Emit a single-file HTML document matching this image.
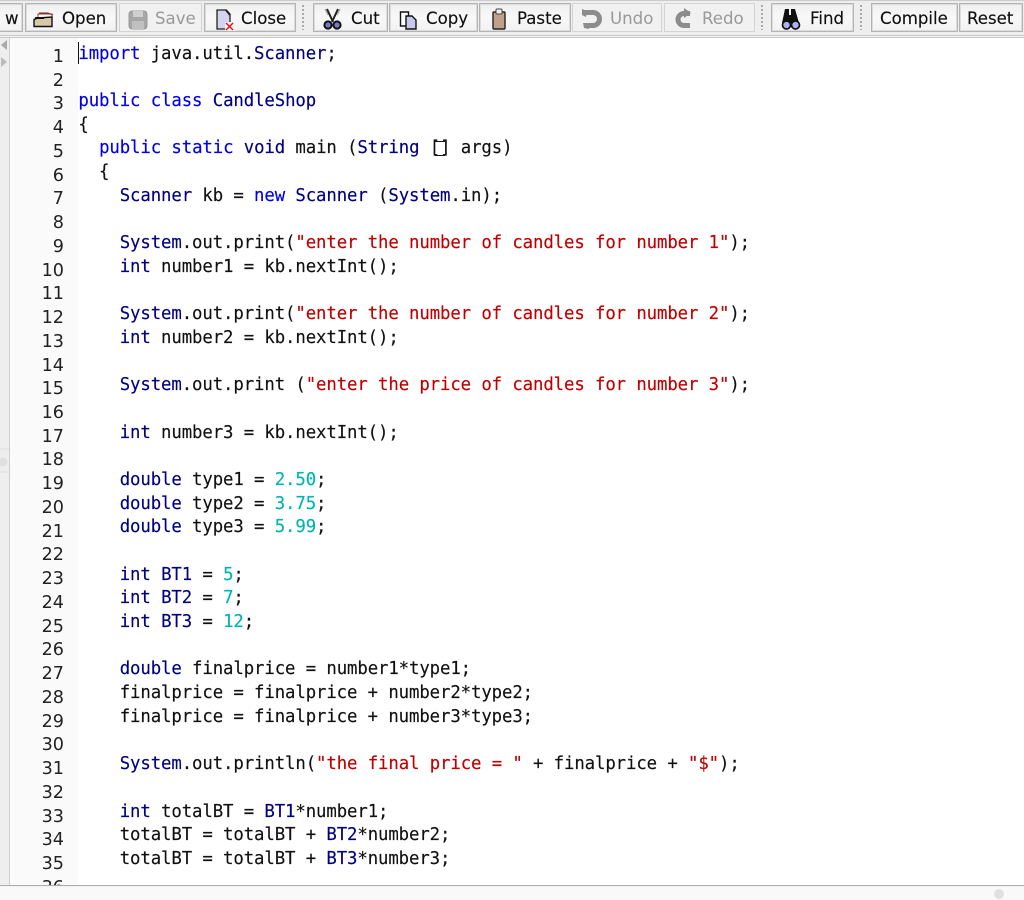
<!DOCTYPE html>
<html><head><meta charset="utf-8"><style>
html,body{margin:0;padding:0;background:#f9f9f9}
#root{position:relative;width:1024px;height:900px;overflow:hidden;background:#f9f9f9;font-family:"DejaVu Sans","Liberation Sans",sans-serif}
#tb{position:absolute;left:0;top:0;width:1024px;height:35px;background:#eee;border-top:1px solid #ccc;box-sizing:border-box}
#tl{position:absolute;left:0;top:35px;width:1024px;height:3px;background:#f4f4f4;border-top:1px solid #c8c8c8;border-bottom:1px solid #c8c8c8;box-sizing:border-box}
.b{position:absolute;top:3px;height:29px;box-sizing:border-box;border:1px solid #b4b4b4;box-shadow:inset 0 0 0 1px #dcdcdc;background:linear-gradient(#efefef,#f8f8f8 50%,#f2f2f2);font-size:16.6px;line-height:29px;color:#111;white-space:nowrap;-webkit-text-stroke:0.15px #111}
.b.d{color:#999;border-color:#d4d4d4;background:#f1f1f1;box-shadow:none;-webkit-text-stroke:0}
.b span{position:absolute;top:0}
.b svg{position:absolute;top:2px;left:0}
.sep{position:absolute;top:5px;width:2px;height:25px;background:repeating-linear-gradient(#aaa 0 2px,transparent 2px 4px)}
#side{position:absolute;left:0;top:38px;width:10px;height:847px;background:#eee;border-right:1px solid #cfcfcf;box-sizing:border-box}
#ed{position:absolute;left:10px;top:38px;width:1014px;height:847px;background:#fff;overflow:hidden}
#gut{position:absolute;left:0;top:0;width:68px;height:847px;background:#fafafa}
#nums{position:absolute;left:0;top:8px;width:54px;text-align:right;font-size:17.6px;line-height:23.73px;color:#222;margin:0;font-family:"DejaVu Sans",sans-serif}
#code{position:absolute;left:68.4px;top:4.5px;margin:0;font-family:"DejaVu Sans Mono","Liberation Mono",monospace;font-size:17.35px;letter-spacing:-0.11px;line-height:23.68px;color:#111;white-space:pre;-webkit-text-stroke:0.15px}
#cur{position:absolute;left:68px;top:4px;width:1px;height:22px;background:#111}
#line2{position:absolute;left:0;top:885px;width:1024px;height:1px;background:#adadad}
#dot{position:absolute;left:994px;top:889px;width:10px;height:10px;border-radius:50%;background:#e0e0e0}
i{font-style:normal;color:#0000e6}
u{text-decoration:none;color:#000080}
s{text-decoration:none;color:#c00000}
b{font-weight:normal;color:#00b4b4}
.bx{position:relative}
.bx::after{content:"";position:absolute;left:5px;right:5px;top:3px;height:12.7px;border-top:1.4px solid #111;border-bottom:1.4px solid #111}
</style></head><body><div id="root">
<div id="tb"></div>
<div id="tl"></div>

<div class="b" style="left:-2px;width:25px"><span style="left:6px">w</span></div>

<div class="b" style="left:25px;width:92px"><svg width="30" height="26" viewBox="0 0 30 26"><path d="M12 8h14v12H12z" fill="#fff" stroke="#8a3a2a"/><path d="M13 7h9l5 2" fill="none" stroke="#7a2a20"/><path d="M12 12l-4 1.5V20.500h18V11z" fill="#d8c8a8" stroke="#111" stroke-width="1.4"/><path d="M9 12h9" stroke="#111" stroke-width="2"/></svg><span style="left:36px">Open</span></div>

<div class="b d" style="left:119px;width:83px"><svg width="30" height="26" viewBox="0 0 30 26"><rect x="9" y="5" width="18" height="18" rx="3" fill="#a6a6a6" stroke="#999"/><rect x="13" y="5" width="10" height="6" fill="#cfcfcf"/><rect x="12" y="15" width="12" height="8" fill="#c0c0c0"/></svg><span style="left:35px">Save</span></div>

<div class="b" style="left:204px;width:92px"><svg width="32" height="26" viewBox="0 0 32 26"><path d="M12 4h9l4 4v15H12z" fill="#d4d4f0" stroke="#222" stroke-width="1.3"/><path d="M21 4l4 5" stroke="#222" stroke-width="2"/><rect x="20" y="16" width="10" height="9" fill="#f4f4f4"/><path d="M21 17l7 7M28 17l-7 7" stroke="#e01010" stroke-width="1.4"/></svg><span style="left:36px">Close</span></div>

<div class="sep" style="left:302px"></div>

<div class="b" style="left:313px;width:75px"><svg width="30" height="26" viewBox="0 0 30 26"><path d="M13 3l6 13M24 3l-6 13" stroke="#222" stroke-width="2" fill="none"/><path d="M11 3l3 6M26 3l-3 6" stroke="#999" stroke-width="1"/><circle cx="14" cy="19" r="3.600" fill="#7878c8" stroke="#111" stroke-width="2"/><circle cx="23" cy="19" r="3.600" fill="#7878c8" stroke="#111" stroke-width="2"/></svg><span style="left:37px">Cut</span></div>

<div class="b" style="left:389px;width:89px"><svg width="30" height="26" viewBox="0 0 30 26"><path d="M10.500 6h8v14h-8z" fill="#fff" stroke="#111" stroke-width="1.4"/><path d="M16 10h6l4 4v9H16z" fill="#c8c8ec" stroke="#111" stroke-width="1.4"/></svg><span style="left:36px">Copy</span></div>

<div class="b" style="left:479px;width:92px"><svg width="30" height="26" viewBox="0 0 30 26"><rect x="13" y="6" width="12" height="17" rx="1" fill="#bfa08a" stroke="#222" stroke-width="1.4"/><rect x="16" y="3" width="6" height="5" rx="1" fill="#eee" stroke="#444"/></svg><span style="left:37px">Paste</span></div>

<div class="b d" style="left:572px;width:90px"><svg width="32" height="26" viewBox="0 0 32 26"><path d="M12 6.500h8a6.500 6.500 0 0 1 0 13h-6" fill="none" stroke="#8c8c8c" stroke-width="5"/><path d="M9 3l5 2-1 6-4-2zM10 17l6 0 0 6-5-1z" fill="#8c8c8c"/></svg><span style="left:37px">Undo</span></div>

<div class="b d" style="left:664px;width:91px"><svg width="30" height="26" viewBox="0 0 30 26"><path d="M25 7.500h-6a6 6 0 0 0 0 12h6" fill="none" stroke="#8c8c8c" stroke-width="5"/><path d="M19 2l7 5-7 5z" fill="#8c8c8c"/></svg><span style="left:37px">Redo</span></div>

<div class="sep" style="left:761px"></div>

<div class="b" style="left:771px;width:83px"><svg width="32" height="26" viewBox="0 0 32 26"><path d="M13 3h4v6h2V3h4l4 14H10z" fill="#111"/><circle cx="14.500" cy="19" r="4" fill="#b0b0f0" stroke="#111" stroke-width="1.700"/><circle cx="23.500" cy="19" r="4" fill="#b0b0f0" stroke="#111" stroke-width="1.700"/></svg><span style="left:38px">Find</span></div>

<div class="sep" style="left:860px"></div>

<div class="b" style="left:871px;width:87px"><span style="left:8px">Compile</span></div>
<div class="b" style="left:959px;width:64px"><span style="left:7px">Reset</span></div>

<div id="side">
<svg width="9" height="847" style="position:absolute;left:0;top:0"><path d="M7 2v10l-6-5z" fill="#aaa"/><path d="M1 19v10l6-5z" fill="#bbb"/><path d="M0 411h9M0 434h9" stroke="#ddd"/><circle cx="3" cy="424" r="4.500" fill="#e0e0e0"/></svg>
</div>

<div id="ed">
<div id="gut"></div>
<pre id="nums">1
2
3
4
5
6
7
8
9
10
11
12
13
14
15
16
17
18
19
20
21
22
23
24
25
26
27
28
29
30
31
32
33
34
35
36</pre>
<pre id="code"><i>import</i> java.util.<u>Scanner</u>;

<i>public</i> <i>class</i> <u>CandleShop</u>
{
  <i>public</i> <i>static</i> <u>void</u> main (<u>String</u> <span class="bx">[]</span> args)
  {
    <u>Scanner</u> kb = <i>new</i> <u>Scanner</u> (<u>System</u>.in);

    <u>System</u>.out.print(<s>"enter the number of candles for number 1"</s>);
    <u>int</u> number1 = kb.nextInt();

    <u>System</u>.out.print(<s>"enter the number of candles for number 2"</s>);
    <u>int</u> number2 = kb.nextInt();

    <u>System</u>.out.print (<s>"enter the price of candles for number 3"</s>);

    <u>int</u> number3 = kb.nextInt();

    <u>double</u> type1 = <b>2.50</b>;
    <u>double</u> type2 = <b>3.75</b>;
    <u>double</u> type3 = <b>5.99</b>;

    <u>int</u> <u>BT1</u> = <b>5</b>;
    <u>int</u> <u>BT2</u> = <b>7</b>;
    <u>int</u> <u>BT3</u> = <b>12</b>;

    <u>double</u> finalprice = number1*type1;
    finalprice = finalprice + number2*type2;
    finalprice = finalprice + number3*type3;

    <u>System</u>.out.println(<s>"the final price = "</s> + finalprice + <s>"$"</s>);

    <u>int</u> totalBT = <u>BT1</u>*number1;
    totalBT = totalBT + <u>BT2</u>*number2;
    totalBT = totalBT + <u>BT3</u>*number3;</pre>
<div id="cur"></div>
</div>
<div id="line2"></div>
<div style="position:absolute;left:0;top:886px;width:1024px;height:1px;background:#f2f2f2"></div>
<div id="dot"></div>
</div></body></html>
